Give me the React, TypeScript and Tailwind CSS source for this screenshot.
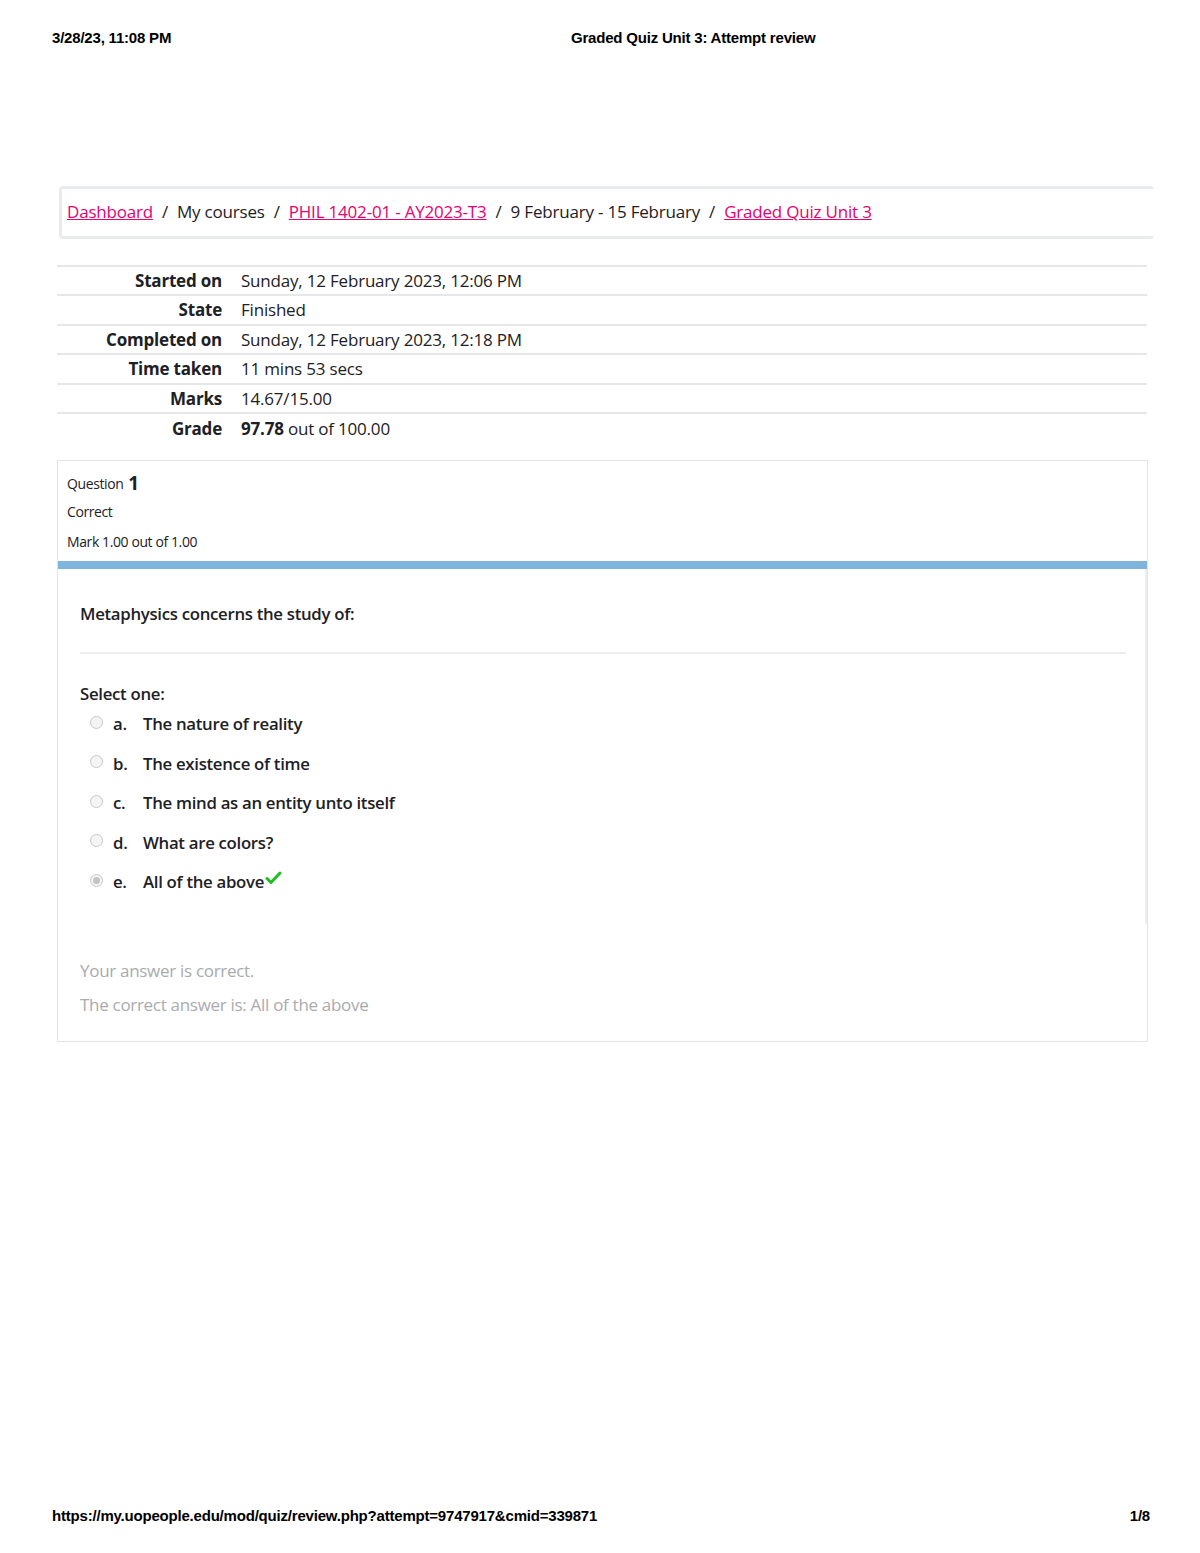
import React from 'react';

const options = [
  { letter: 'a.', text: 'The nature of reality' },
  { letter: 'b.', text: 'The existence of time' },
  { letter: 'c.', text: 'The mind as an entity unto itself' },
  { letter: 'd.', text: 'What are colors?' },
  { letter: 'e.', text: 'All of the above', checked: true },
];

const summary = [
  { label: 'Started on', value: 'Sunday, 12 February 2023, 12:06 PM' },
  { label: 'State', value: 'Finished' },
  { label: 'Completed on', value: 'Sunday, 12 February 2023, 12:18 PM' },
  { label: 'Time taken', value: '11 mins 53 secs' },
  { label: 'Marks', value: '14.67/15.00' },
  { label: 'Grade', value: 'grade' },
];

function Radio({ checked }: { checked?: boolean }) {
  return (
    <span className="flex h-[13px] w-[13px] items-center justify-center rounded-full border border-[#c8c8c8] bg-[#f4f4f4]">
      {checked && <span className="h-[7px] w-[7px] rounded-full bg-[#c4c4c4]" />}
    </span>
  );
}

function Check() {
  return (
    <svg width="17" height="14" viewBox="0 0 16 14" className="mb-[8px] ml-[1px]">
      <path d="M1.5 7.5 L5.5 11.5 L14.5 2" fill="none" stroke="#1fbf1f" strokeWidth="3" strokeLinecap="round" strokeLinejoin="round" />
    </svg>
  );
}

export default function App() {
  return (
    <div className="flex h-[1553px] w-[1200px] flex-col bg-white text-[#1d2125]" style={{ fontFamily: '"Open Sans", "Noto Sans", sans-serif' }}>
      {/* print header */}
      <div className="flex pt-[27px] text-[15px] font-bold tracking-[-0.2px] text-black" style={{ fontFamily: '"Liberation Sans", Arial, sans-serif' }}>
        <span className="ml-[52px] w-[519px]">3/28/23, 11:08 PM</span>
        <span>Graded Quiz Unit 3: Attempt review</span>
      </div>

      {/* breadcrumb */}
      <div className="ml-[59px] mt-[136px] flex h-[53px] w-[1095px] items-center rounded-[4px] border-[3px] border-r-0 border-[#e9ebef] pl-[5px] text-[17px] tracking-[-0.2px]">
        <a className="text-[#e8006f] underline">Dashboard</a>
        <span className="mx-[9px]">/</span>
        <span>My courses</span>
        <span className="mx-[9px]">/</span>
        <a className="text-[#e8006f] underline">PHIL 1402-01 - AY2023-T3</a>
        <span className="mx-[9px]">/</span>
        <span>9 February - 15 February</span>
        <span className="mx-[9px]">/</span>
        <a className="text-[#e8006f] underline">Graded Quiz Unit 3</a>
      </div>

      {/* summary table */}
      <div className="ml-[57px] mt-[26px] w-[1090px] text-[17px] tracking-[-0.2px]">
        {summary.map((row) => (
          <div key={row.label} className="flex h-[29.6px] items-center border-t-2 border-[#e5e7ea]">
            <span className="w-[165px] text-right font-bold">{row.label}</span>
            <span className="ml-[19px]">
              {row.value === 'grade' ? (
                <>
                  <b>97.78</b> out of 100.00
                </>
              ) : (
                row.value
              )}
            </span>
          </div>
        ))}
      </div>

      {/* question */}
      <div className="ml-[57px] mt-[18px] w-[1091px] border border-[#e1e4e8]">
        <div className="px-[9px] pb-[9px] pt-[11px] text-[14px] tracking-[-0.4px]">
          <div className="flex h-[22px] items-end">
            Question <span className="ml-[5px] text-[19px] font-bold leading-[22px]">1</span>
          </div>
          <div className="mt-[8px] leading-[20px]">Correct</div>
          <div className="mt-[10px] leading-[20px]">Mark 1.00 out of 1.00</div>
        </div>
        <div className="h-[8px] bg-[#7fb5dc]" />
        <div className="border-r-2 border-[#eceef0] px-[22px] pb-[30px] pt-[33px] text-[16.8px] font-semibold tracking-[-0.3px]">
          <div className="leading-[24px]">Metaphysics concerns the study of:</div>
          <div className="mt-[26px] h-[2px] w-[1046px] bg-[#eceef0]" />
          <div className="mt-[28px] leading-[24px]">Select one:</div>
          <div className="mt-[6px] flex flex-col gap-[15.5px] pl-[10px]">
            {options.map((o) => (
              <div key={o.letter} className="flex h-[24px] items-center">
                <span className="mb-[4px]">
                  <Radio checked={o.checked} />
                </span>
                <span className="ml-[10px] w-[30px]">{o.letter}</span>
                <span>{o.text}</span>
                {o.checked && <Check />}
              </div>
            ))}
          </div>
        </div>
        <div className="px-[22px] pb-[24px] pt-[35px] text-[17px] tracking-[-0.3px] text-[#a9abad]">
          <div className="leading-[24px]">Your answer is correct.</div>
          <div className="mt-[10px] leading-[24px]">The correct answer is: All of the above</div>
        </div>
      </div>

      {/* print footer */}
      <div className="mt-auto flex pb-[26px] text-[15px] font-bold tracking-[-0.2px] text-black" style={{ fontFamily: '"Liberation Sans", Arial, sans-serif' }}>
        <span className="ml-[52px]">https://my.uopeople.edu/mod/quiz/review.php?attempt=9747917&amp;cmid=339871</span>
        <span className="ml-auto mr-[50px]">1/8</span>
      </div>
    </div>
  );
}
